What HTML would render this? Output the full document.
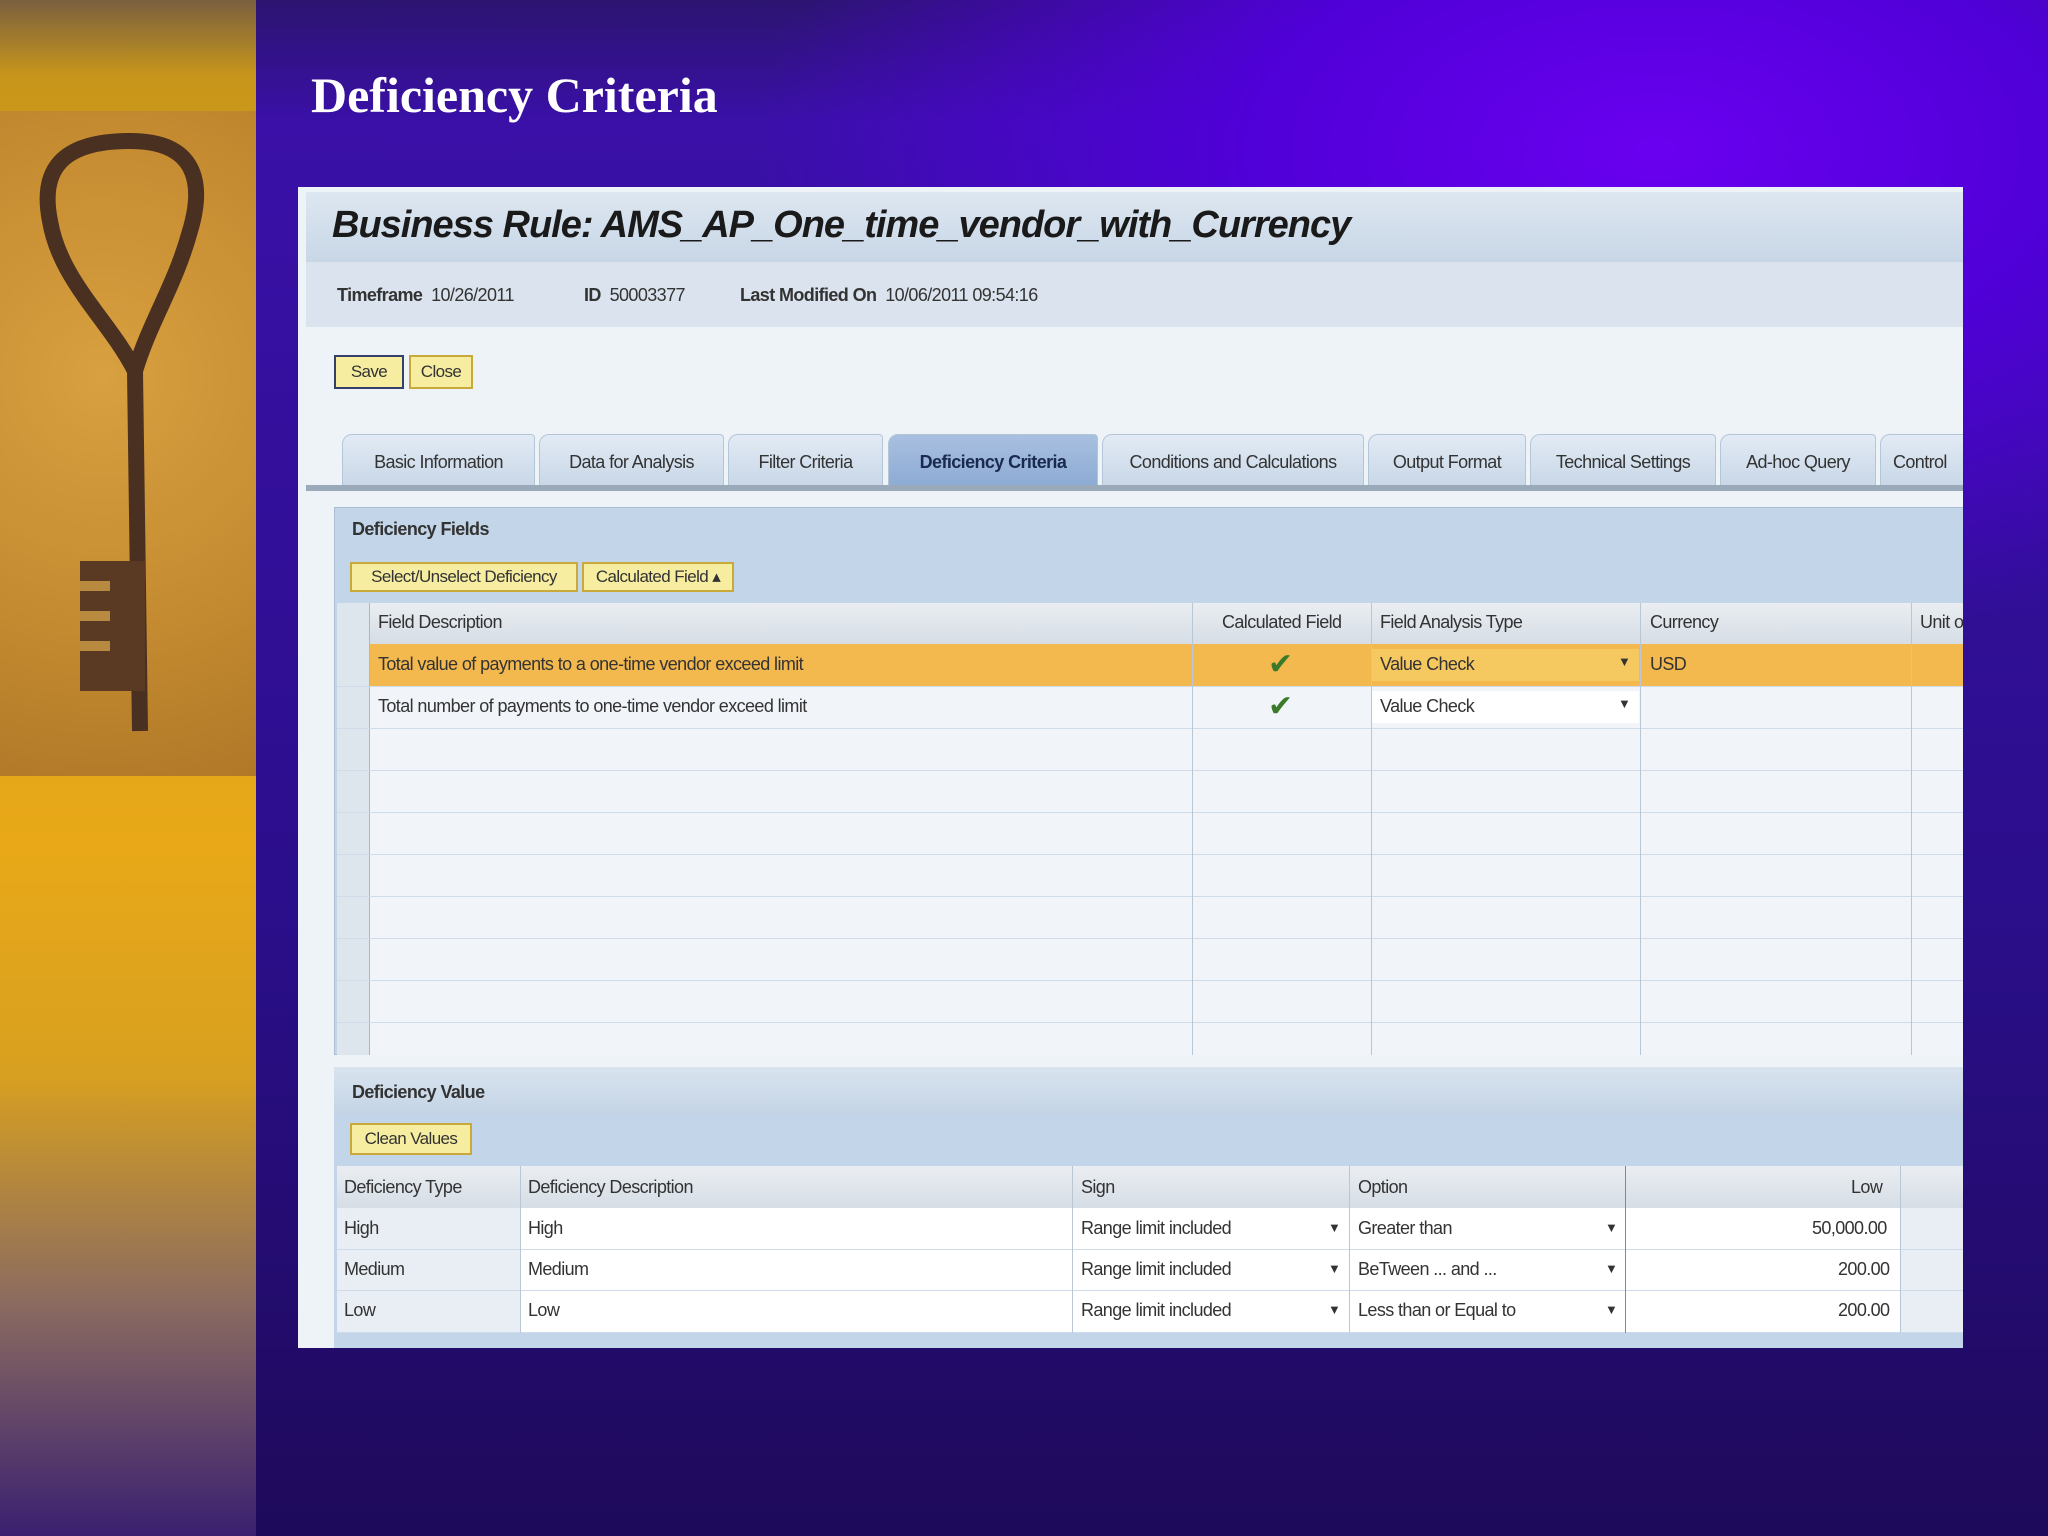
<!DOCTYPE html>
<html><head><meta charset="utf-8"><style>
*{margin:0;padding:0;box-sizing:border-box}
body{width:2048px;height:1536px;overflow:hidden;position:relative;font-family:"Liberation Sans",sans-serif;
background:linear-gradient(180deg,#2c1470 0%,#3a10a8 8%,#2a0e8a 60%,#1e0a5a 100%)}
.a{position:absolute}
.t{font-size:18px;color:#333;white-space:nowrap;letter-spacing:-0.6px}
.btn{position:absolute;background:#f6eda0;border:2px solid #c9a93a;font-size:17px;color:#333;text-align:center;letter-spacing:-0.6px}
.tab{position:absolute;top:247px;height:52px;background:linear-gradient(#e2ebf5,#c9d7e7);border:1px solid #b5c5d8;font-size:18px;color:#333;text-align:center;line-height:54px;letter-spacing:-0.6px;border-radius:10px 4px 0 0}
.hl{position:absolute;height:1px;background:#cfdbe8}
.vl{position:absolute;width:1px;background:#b9c6d4}
</style></head><body>
<div class="a" style="left:256px;top:0;width:1792px;height:1536px;background:radial-gradient(ellipse 900px 500px at 1400px 150px,#6a00f0 0%,#5000d8 45%,rgba(60,10,160,0) 100%)"></div>
<div class="a" style="left:0;top:0;width:256px;height:1536px;background:linear-gradient(180deg,#7a6040 0%,#c8961a 5%,#e8a818 55%,#d8a020 70%,#8a6a60 85%,#3a2070 100%)"></div>
<div class="a" style="left:0;top:111px;width:256px;height:665px;background:radial-gradient(circle at 40% 40%,#d8a040,#c48a30 60%,#b07828)"></div>
<svg class="a" style="left:0;top:111px" width="256" height="665">
<path d="M130 30 C60 30 40 60 50 110 C60 170 110 210 135 260 L140 620" stroke="#4a3020" stroke-width="16" fill="none"/>
<path d="M130 30 C195 30 205 70 190 120 C175 175 150 210 135 260" stroke="#4a3020" stroke-width="16" fill="none"/>
<rect x="80" y="450" width="65" height="130" fill="#5a3a22"/>
<rect x="80" y="470" width="30" height="10" fill="#b88a40"/><rect x="80" y="500" width="30" height="10" fill="#b88a40"/><rect x="80" y="530" width="30" height="10" fill="#b88a40"/>
</svg>
<div class="a" style="left:311px;top:66px;font:bold 50px 'Liberation Serif',serif;color:#fff">Deficiency Criteria</div>

<div class="a" style="left:298px;top:187px;width:1665px;height:1161px;background:#eef3f8;overflow:hidden">
 <div class="a" style="left:8px;top:5px;width:1660px;height:70px;background:linear-gradient(#dde7f1,#c8d6e6)"></div>
 <div class="a" style="left:34px;top:17px;font:italic bold 38px 'Liberation Sans',sans-serif;color:#1a1a1a;letter-spacing:-1px">Business Rule: AMS_AP_One_time_vendor_with_Currency</div>
 <div class="a" style="left:8px;top:75px;width:1660px;height:65px;background:#dbe4ee"></div>
 <div class="a t" style="left:39px;top:98px"><b>Timeframe</b>&nbsp; 10/26/2011</div>
 <div class="a t" style="left:286px;top:98px"><b>ID</b>&nbsp; 50003377</div>
 <div class="a t" style="left:442px;top:98px"><b>Last Modified On</b>&nbsp; 10/06/2011 09:54:16</div>
 <div class="btn" style="left:36px;top:168px;width:70px;height:34px;line-height:30px;border-color:#33416a">Save</div>
 <div class="btn" style="left:111px;top:168px;width:64px;height:34px;line-height:30px">Close</div>
 <div class="tab" style="left:44px;width:193px">Basic Information</div>
 <div class="tab" style="left:241px;width:185px">Data for Analysis</div>
 <div class="tab" style="left:430px;width:155px">Filter Criteria</div>
 <div class="tab" style="left:590px;width:210px;background:linear-gradient(#a8c0e0,#8eabd4);font-weight:bold;color:#1a2a50">Deficiency Criteria</div>
 <div class="tab" style="left:804px;width:262px">Conditions and Calculations</div>
 <div class="tab" style="left:1070px;width:158px">Output Format</div>
 <div class="tab" style="left:1232px;width:186px">Technical Settings</div>
 <div class="tab" style="left:1422px;width:156px">Ad-hoc Query</div>
 <div class="tab" style="left:1582px;width:100px;text-align:left;padding-left:12px">Control</div>
 <div class="a" style="left:8px;top:298px;width:1660px;height:6px;background:#9aaabb"></div>

 <div class="a" style="left:36px;top:320px;width:1640px;height:548px;background:#c3d5e8;border:1px solid #aabdd2"></div>
 <div class="a t" style="left:54px;top:332px;font-weight:bold">Deficiency Fields</div>
 <div class="btn" style="left:52px;top:375px;width:228px;height:30px;line-height:26px">Select/Unselect Deficiency</div>
 <div class="btn" style="left:284px;top:375px;width:152px;height:30px;line-height:26px">Calculated Field ▴</div>
 <div class="a" style="left:39px;top:416px;width:1640px;height:452px;background:#f1f5f9"></div>
 <div class="a" style="left:39px;top:416px;width:1640px;height:41px;background:linear-gradient(#eaeef2,#d6dde5)"></div>
 <div class="a" style="left:39px;top:416px;width:33px;height:452px;background:#dde5ed;border-right:1px solid #aab8c6"></div>
 <div class="a" style="left:72px;top:457px;width:1600px;height:42px;background:#f4b94e"></div>
 <div class="a" style="left:1073px;top:462px;width:268px;height:32px;background:#f6c860"></div>
 <div class="a" style="left:1073px;top:504px;width:268px;height:32px;background:#fff"></div>
 <div class="hl" style="left:39px;top:499px;width:1640px"></div>
 <div class="hl" style="left:39px;top:541px;width:1640px"></div>
 <div class="hl" style="left:39px;top:583px;width:1640px"></div>
 <div class="hl" style="left:39px;top:625px;width:1640px"></div>
 <div class="hl" style="left:39px;top:667px;width:1640px"></div>
 <div class="hl" style="left:39px;top:709px;width:1640px"></div>
 <div class="hl" style="left:39px;top:751px;width:1640px"></div>
 <div class="hl" style="left:39px;top:793px;width:1640px"></div>
 <div class="hl" style="left:39px;top:835px;width:1640px"></div>
 <div class="vl" style="left:894px;top:416px;height:452px"></div>
 <div class="vl" style="left:1073px;top:416px;height:452px"></div>
 <div class="vl" style="left:1342px;top:416px;height:452px"></div>
 <div class="vl" style="left:1613px;top:416px;height:452px"></div>
 <div class="a t" style="left:80px;top:425px">Field Description</div>
 <div class="a t" style="left:924px;top:425px">Calculated Field</div>
 <div class="a t" style="left:1082px;top:425px">Field Analysis Type</div>
 <div class="a t" style="left:1352px;top:425px">Currency</div>
 <div class="a t" style="left:1622px;top:425px">Unit of</div>
 <div class="a t" style="left:80px;top:467px">Total value of payments to a one-time vendor exceed limit</div>
 <div class="a t" style="left:80px;top:509px">Total number of payments to one-time vendor exceed limit</div>
 <div class="a" style="left:970px;top:460px;font-size:30px;color:#3a7a2a">✔</div>
 <div class="a" style="left:970px;top:502px;font-size:30px;color:#3a7a2a">✔</div>
 <div class="a t" style="left:1082px;top:467px">Value Check</div>
 <div class="a t" style="left:1320px;top:467px;font-size:13px">▼</div>
 <div class="a t" style="left:1082px;top:509px">Value Check</div>
 <div class="a t" style="left:1320px;top:509px;font-size:13px">▼</div>
 <div class="a t" style="left:1352px;top:467px">USD</div>

 <div class="a" style="left:36px;top:880px;width:1640px;height:290px;background:#c3d5e8"></div>
 <div class="a" style="left:36px;top:880px;width:1640px;height:48px;background:linear-gradient(#d8e3ee,#c4d4e6)"></div>
 <div class="a t" style="left:54px;top:895px;font-weight:bold">Deficiency Value</div>
 <div class="btn" style="left:52px;top:936px;width:122px;height:32px;line-height:28px">Clean Values</div>
 <div class="a" style="left:39px;top:979px;width:1640px;height:42px;background:linear-gradient(#eaeef2,#d6dde5)"></div>
 <div class="a" style="left:39px;top:1021px;width:1640px;height:125px;background:#fff"></div>
 <div class="a" style="left:39px;top:1021px;width:183px;height:125px;background:#e8eef4"></div>
 <div class="a" style="left:1602px;top:1021px;width:80px;height:125px;background:#e8eef4"></div>
 <div class="hl" style="left:39px;top:1062px;width:1640px"></div>
 <div class="hl" style="left:39px;top:1103px;width:1640px"></div>
 <div class="hl" style="left:39px;top:1145px;width:1640px"></div>
 <div class="vl" style="left:222px;top:979px;height:167px"></div>
 <div class="vl" style="left:774px;top:979px;height:167px"></div>
 <div class="vl" style="left:1051px;top:979px;height:167px"></div>
 <div class="vl" style="left:1327px;top:979px;height:167px;background:#888"></div>
 <div class="vl" style="left:1602px;top:979px;height:167px"></div>
 <div class="a t" style="left:46px;top:990px">Deficiency Type</div>
 <div class="a t" style="left:230px;top:990px">Deficiency Description</div>
 <div class="a t" style="left:783px;top:990px">Sign</div>
 <div class="a t" style="left:1060px;top:990px">Option</div>
 <div class="a t" style="left:1553px;top:990px">Low</div>
 <div class="a t" style="left:46px;top:1031px">High</div><div class="a t" style="left:230px;top:1031px">High</div>
 <div class="a t" style="left:46px;top:1072px">Medium</div><div class="a t" style="left:230px;top:1072px">Medium</div>
 <div class="a t" style="left:46px;top:1113px">Low</div><div class="a t" style="left:230px;top:1113px">Low</div>
 <div class="a t" style="left:783px;top:1031px">Range limit included</div><div class="a t" style="left:1030px;top:1033px;font-size:13px">▼</div>
 <div class="a t" style="left:783px;top:1072px">Range limit included</div><div class="a t" style="left:1030px;top:1074px;font-size:13px">▼</div>
 <div class="a t" style="left:783px;top:1113px">Range limit included</div><div class="a t" style="left:1030px;top:1115px;font-size:13px">▼</div>
 <div class="a t" style="left:1060px;top:1031px">Greater than</div><div class="a t" style="left:1307px;top:1033px;font-size:13px">▼</div>
 <div class="a t" style="left:1060px;top:1072px">BeTween ... and ...</div><div class="a t" style="left:1307px;top:1074px;font-size:13px">▼</div>
 <div class="a t" style="left:1060px;top:1113px">Less than or Equal to</div><div class="a t" style="left:1307px;top:1115px;font-size:13px">▼</div>
 <div class="a t" style="left:1514px;top:1031px">50,000.00</div>
 <div class="a t" style="left:1540px;top:1072px">200.00</div>
 <div class="a t" style="left:1540px;top:1113px">200.00</div>
</div>
</body></html>
